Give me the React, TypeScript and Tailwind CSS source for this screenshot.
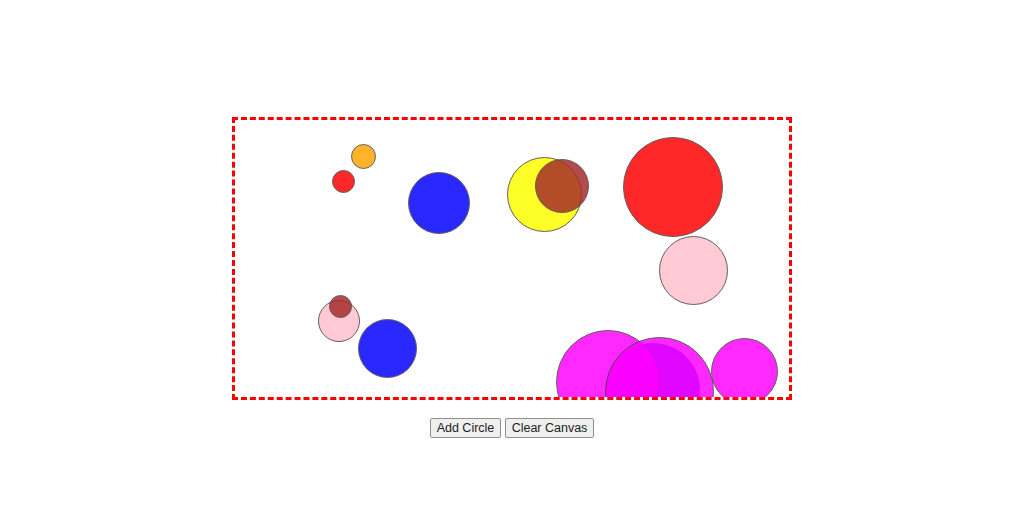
import React from "react";

interface Circle {
  x: number;
  y: number;
  r: number;
  color: string;
  noBorder?: boolean;
}

// centres and radii measured inside the canvas box
const circles: Circle[] = [
  { x: 128.5, y: 36, r: 12.5, color: "orange" },
  { x: 108, y: 61.5, r: 11.5, color: "red" },
  { x: 204, y: 83, r: 31, color: "blue" },
  { x: 309.5, y: 74.5, r: 37.5, color: "yellow" },
  { x: 327, y: 65.5, r: 27, color: "brown" },
  { x: 458.5, y: 150, r: 34.5, color: "pink" },
  { x: 438, y: 67, r: 50, color: "red" },
  { x: 103.5, y: 200.5, r: 21, color: "pink" },
  { x: 105, y: 186, r: 11.5, color: "brown" },
  { x: 152, y: 228, r: 29.5, color: "blue" },
  { x: 418, y: 270, r: 47, color: "#2000ff", noBorder: true },
  { x: 373, y: 262, r: 52, color: "magenta" },
  { x: 424.5, y: 271.5, r: 54.5, color: "magenta" },
  { x: 509.5, y: 251, r: 33.5, color: "magenta" },
];

export default function App() {
  return (
    <div className="flex flex-col items-center pt-[117px] font-['Liberation_Sans',Arial,sans-serif]">
      <div className="relative w-[560px] h-[283px] border-[3px] border-dashed border-[#ff0000] overflow-hidden bg-white">
        {circles.map((c, i) => (
          <div
            key={i}
            className={`absolute rounded-full box-border opacity-[0.84] ${c.noBorder ? "" : "border border-[#444]"}`}
            style={{
              left: c.x - c.r,
              top: c.y - c.r,
              width: c.r * 2,
              height: c.r * 2,
              backgroundColor: c.color,
            }}
          />
        ))}
      </div>
      <div className="mt-[18px] flex gap-[4px]">
        <button className="h-[20px] w-[71px] bg-[#efefef] border border-[#8f8f8f] rounded-[2px] text-[12.5px] leading-[18px] text-[#222]">
          Add Circle
        </button>
        <button className="h-[20px] w-[89px] bg-[#efefef] border border-[#8f8f8f] rounded-[2px] text-[12.5px] leading-[18px] text-[#222]">
          Clear Canvas
        </button>
      </div>
    </div>
  );
}
